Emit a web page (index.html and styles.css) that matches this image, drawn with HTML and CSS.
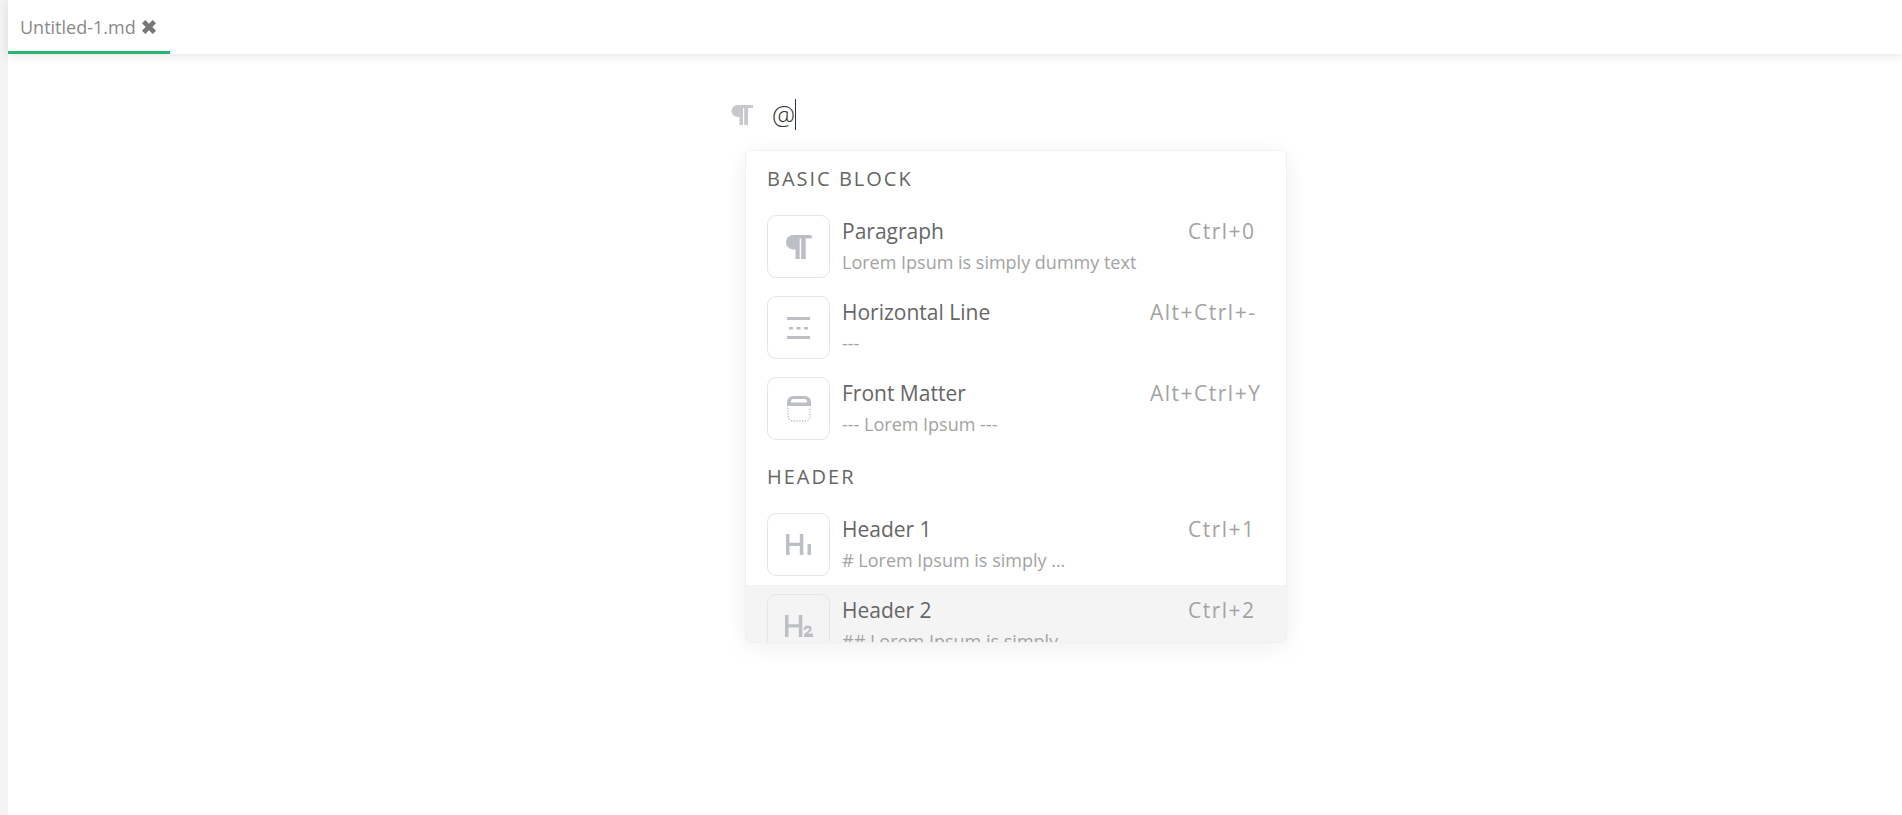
FILE: index.html
```html
<!DOCTYPE html>
<html lang="en">
<head>
    <meta charset="UTF-8">
    <title>Untitled-1.md</title>
    <link rel="stylesheet" href="styles.css">
</head>
<body>
    <div class="sidebar"></div>

    <div class="main">
        <header class="tabs">
            <div class="tab">
                <span>Untitled-1.md</span>
                <svg class="tab-close" viewBox="2 2 10 10"><path d="M2 4.400 4.400 2 7 4.600 9.600 2 12 4.400 9.400 7 12 9.600 9.600 12 7 9.400 4.400 12 2 9.600 4.600 7Z"/></svg>
            </div>
        </header>

        <div class="editor">
            <div class="line">
                <svg class="line-icon" viewBox="0 0 22 20"><path d="M22 0H6.500a6 6 0 0 0 0 12h2V20H12V3h1.200v17H17V3h5Z"/></svg>
                <span class="line-text">@</span><span class="caret"></span>
            </div>

            <!-- Quick insert popup -->
            <div class="quick-insert">
                <div class="group-title">BASIC BLOCK</div>
                <div class="item">
                    <div class="item-icon">
                        <svg class="icon-para" viewBox="0 0 22 20"><path d="M22 0H6.500a6 6 0 0 0 0 12h2V20H12V3h1.200v17H17V3h5Z"/></svg>
                    </div>
                    <div class="item-body">
                        <div class="item-name">Paragraph</div>
                        <div class="item-desc">Lorem Ipsum is simply dummy text</div>
                    </div>
                    <div class="item-key">Ctrl+0</div>
                </div>
                <div class="item">
                    <div class="item-icon">
                        <svg class="icon-hr" viewBox="0 0 23 22"><path d="M0 0h23v3H0ZM0 19h23v3H0ZM2 10h4v2.600H2ZM9.500 10h4v2.600h-4ZM17 10h4v2.600h-4Z"/></svg>
                    </div>
                    <div class="item-body">
                        <div class="item-name">Horizontal Line</div>
                        <div class="item-desc">---</div>
                    </div>
                    <div class="item-key key-long">Alt+Ctrl+-</div>
                </div>
                <div class="item">
                    <div class="item-icon">
                        <svg class="icon-front" viewBox="0 0 24 26">
                            <path fill-rule="evenodd" d="M0 10V6a6 6 0 0 1 6-6h12a6 6 0 0 1 6 6v4ZM4 6.500h16V5.500A2.500 2.500 0 0 0 17.500 3h-11A2.500 2.500 0 0 0 4 5.500Z"/>
                            <path class="dotted" d="M1 11.500v8.500a5 5 0 0 0 5 5h12a5 5 0 0 0 5-5v-8.500"/>
                        </svg>
                    </div>
                    <div class="item-body">
                        <div class="item-name">Front Matter</div>
                        <div class="item-desc">--- Lorem Ipsum ---</div>
                    </div>
                    <div class="item-key key-long">Alt+Ctrl+Y</div>
                </div>

                <div class="group-title">HEADER</div>
                <div class="item">
                    <div class="item-icon">
                        <svg class="icon-h1" viewBox="0 0 25 21"><path d="M0 0h3.500v8.700h10.300V0h3.500v21h-3.500v-9H3.500v9H0ZM21.500 10H25v11h-3.500Z"/></svg>
                    </div>
                    <div class="item-body">
                        <div class="item-name">Header 1</div>
                        <div class="item-desc"># Lorem Ipsum is simply ...</div>
                    </div>
                    <div class="item-key">Ctrl+1</div>
                </div>
                <div class="item active">
                    <div class="item-icon">
                        <svg class="icon-h2" viewBox="0 0 28 22"><path d="M0 0h3.500v9.200h10.300V0h3.500v22h-3.500v-9.500H3.500V22H0ZM19 22v-2.800l4.300-3.500c1.200-1.100 1.300-2.700-.5-2.700-1.200 0-1.700.8-1.800 1.800h-2.600c.1-2.600 2-4.300 4.500-4.300 3.400 0 5 3 2.600 5.800l-2.500 2.200H28V22Z"/></svg>
                    </div>
                    <div class="item-body">
                        <div class="item-name">Header 2</div>
                        <div class="item-desc">## Lorem Ipsum is simply ...</div>
                    </div>
                    <div class="item-key">Ctrl+2</div>
                </div>
            </div>
        </div>
    </div>
</body>
</html>
```

FILE: styles.css
```css
* {
    margin: 0;
    padding: 0;
    box-sizing: border-box;
    font-family: 'Open Sans', 'Noto Sans', sans-serif;
}

html, body {
    height: 100%;
    overflow: hidden;
}

body {
    display: flex;
    background-color: #fff;
    color: #555;
}

.sidebar {
    width: 8px;
    flex-shrink: 0;
    background-color: #f3f3f3;
}

.main {
    flex: 1;
    min-width: 0;
}

.tabs {
    height: 54px;
    display: flex;
    background-color: #fff;
    box-shadow: 0 2px 10px rgba(0,0,0,0.1);
}

.tab {
    width: 162px;
    height: 54px;
    padding: 2px 0 0 12px;
    display: flex;
    align-items: center;
    gap: 6px;
    font-size: 18px;
    color: #8a8a8a;
    border-bottom: 3px solid #27b573;
}

.tab-close {
    width: 14px;
    height: 14px;
    fill: #777;
}

.editor {
    width: 540px;
    margin-left: 738px;
}

.line {
    height: 97px;
    padding-top: 45px;
    display: flex;
    align-items: flex-start;
    margin-left: -15px;
}

.line-icon {
    width: 22px;
    height: 20px;
    margin: 6px 19px 0 0;
    fill: #c6c8cc;
}

.line-text {
    font-size: 26px;
    line-height: 31px;
    font-weight: 300;
    color: #333;
}

.caret {
    width: 1px;
    height: 31px;
    background-color: #333;
}

.quick-insert {
    height: 491px;
    overflow: hidden;
    background-color: #fff;
    border-radius: 4px;
    box-shadow: 0 0 0 1px #f0f0f0, 0 4px 24px rgba(0,0,0,0.07);
}

.group-title {
    height: 55px;
    padding: 14px 0 0 21px;
    font-size: 20px;
    line-height: 27px;
    letter-spacing: 2px;
    color: #666;
}

.item {
    height: 81px;
    padding: 9px 0 0 21px;
    display: flex;
}

.item.active {
    background-color: #f4f4f4;
}

.item-icon {
    width: 63px;
    height: 63px;
    flex-shrink: 0;
    border: 1px solid #e5e5e5;
    border-radius: 9px;
    display: flex;
    justify-content: center;
    align-items: center;
}

.item-icon svg {
    fill: #bcbfc4;
}

.icon-para {
    width: 27px;
    height: 24px;
}

.icon-hr {
    width: 23px;
    height: 22px;
}

.icon-front {
    width: 24px;
    height: 26px;
}

.icon-h1 {
    width: 25px;
    height: 21px;
}

.icon-h2 {
    width: 28px;
    height: 22px;
}

.item-icon .dotted {
    fill: none;
    stroke: #bcbfc4;
    stroke-width: 1.300;
    stroke-dasharray: 1.400 1.400;
}

.item-body {
    flex: 1;
    padding-left: 12px;
}

.item-name {
    margin-top: 3px;
    font-size: 21px;
    line-height: 27px;
    color: #666;
}

.item-desc {
    margin-top: 5px;
    font-size: 18px;
    line-height: 24px;
    color: #a3a3a3;
}

.item-key {
    width: 98px;
    padding-top: 3px;
    font-size: 21px;
    line-height: 27px;
    letter-spacing: 1.500px;
    color: #a3a3a3;
}

.item-key.key-long {
    width: 136px;
}
```
